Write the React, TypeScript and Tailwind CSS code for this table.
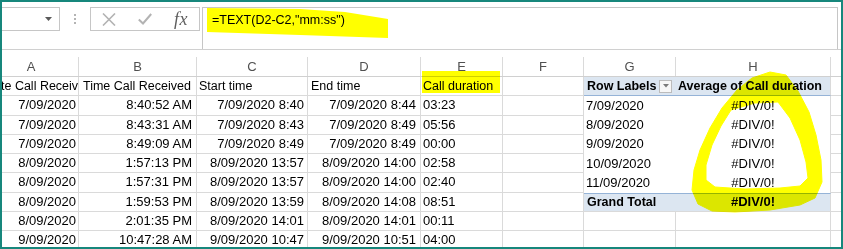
import React from "react";

const data: string[][] = [
  ["7/09/2020", "8:40:52 AM", "7/09/2020 8:40", "7/09/2020 8:44", "03:23"],
  ["7/09/2020", "8:43:31 AM", "7/09/2020 8:43", "7/09/2020 8:49", "05:56"],
  ["7/09/2020", "8:49:09 AM", "7/09/2020 8:49", "7/09/2020 8:49", "00:00"],
  ["8/09/2020", "1:57:13 PM", "8/09/2020 13:57", "8/09/2020 14:00", "02:58"],
  ["8/09/2020", "1:57:31 PM", "8/09/2020 13:57", "8/09/2020 14:00", "02:40"],
  ["8/09/2020", "1:59:53 PM", "8/09/2020 13:59", "8/09/2020 14:08", "08:51"],
  ["8/09/2020", "2:01:35 PM", "8/09/2020 14:01", "8/09/2020 14:01", "00:11"],
  ["9/09/2020", "10:47:28 AM", "9/09/2020 10:47", "9/09/2020 10:51", "04:00"],
];
const pivot = ["7/09/2020", "8/09/2020", "9/09/2020", "10/09/2020", "11/09/2020"];

const G = "border-[#dadada]";

function HeaderRow() {
  const letters: [string, string][] = [
    ["B", "w-[118px]"],
    ["C", "w-[111px]"],
    ["D", "w-[113px]"],
    ["E", "w-[82px]"],
    ["F", "w-[81px]"],
    ["G", "w-[92px]"],
    ["H", "w-[155px]"],
  ];
  return (
    <div className="h-[20px] flex border-b border-[#d0d0d0] text-[#505050] text-[13px]">
      <div className="w-[77px] shrink-0 overflow-hidden border-r border-[#dadada]">
        <div className="ml-[-19px] w-[96px] h-full flex items-center justify-center">A</div>
      </div>
      {letters.map(([l, w]) => (
        <div key={l} className={`${w} shrink-0 h-full flex items-center justify-center border-r border-[#dadada]`}>
          {l}
        </div>
      ))}
      <div className="flex-1" />
    </div>
  );
}

function TitleRow() {
  return (
    <div className="h-[19.25px] flex text-[12.5px]">
      <div className={`w-[77px] shrink-0 h-full overflow-hidden border-r border-b ${G}`}>
        <div className="ml-[-19px] w-[96px] h-full flex items-center pl-[2px] whitespace-nowrap">Date Call Received</div>
      </div>
      <div className={`w-[118px] shrink-0 h-full flex items-center pl-[4px] border-r border-b ${G} whitespace-nowrap overflow-hidden`}>Time Call Received</div>
      <div className={`w-[111px] shrink-0 h-full flex items-center pl-[2px] border-r border-b ${G}`}>Start time</div>
      <div className={`w-[113px] shrink-0 h-full flex items-center pl-[3px] border-r border-b ${G}`}>End time</div>
      <div className={`w-[82px] shrink-0 h-full flex items-center pl-[2px] border-r border-b ${G} whitespace-nowrap`}>Call duration</div>
      <div className={`w-[81px] shrink-0 h-full border-r border-b ${G}`} />
      <div className="w-[92px] shrink-0 h-full flex items-center justify-between pl-[3px] pr-[4px] bg-[#dce6f1] border-b border-b-[#95b3d7] font-bold">
        <span className="whitespace-nowrap">Row Labels</span>
        <span className="w-[13px] h-[13px] border border-[#bcbcbc] bg-[#f7f7f7] flex items-center justify-center">
          <svg width="6" height="4" viewBox="0 0 6 4">
            <path d="M0 0H6L3 3.5Z" fill="#7a7a7a" />
          </svg>
        </span>
      </div>
      <div className="w-[155px] shrink-0 h-full flex items-center pl-[2px] bg-[#dce6f1] border-b border-b-[#95b3d7] border-r border-r-[#dadada] font-bold whitespace-nowrap">
        Average of Call duration
      </div>
      <div className={`flex-1 h-full border-b ${G}`} />
    </div>
  );
}

function DataRow({ r, i }: { r: string[]; i: number }) {
  const inPivot = i < 5;
  const grand = i === 5;
  return (
    <div className="h-[19.25px] flex">
      <div className={`w-[77px] shrink-0 h-full overflow-hidden border-r border-b ${G}`}>
        <div className="ml-[-19px] w-[96px] h-full flex items-center justify-end pr-[3px]">{r[0]}</div>
      </div>
      <div className={`w-[118px] shrink-0 h-full flex items-center justify-end pr-[4px] border-r border-b ${G}`}>{r[1]}</div>
      <div className={`w-[111px] shrink-0 h-full flex items-center justify-end pr-[3px] border-r border-b ${G} whitespace-nowrap`}>{r[2]}</div>
      <div className={`w-[113px] shrink-0 h-full flex items-center justify-end pr-[4px] border-r border-b ${G} whitespace-nowrap`}>{r[3]}</div>
      <div className={`w-[82px] shrink-0 h-full flex items-center pl-[2px] border-r border-b ${G}`}>{r[4]}</div>
      <div className={`w-[81px] shrink-0 h-full border-r border-b ${G}`} />
      {inPivot ? (
        <>
          <div className="w-[92px] shrink-0 h-full flex items-center pl-[2px]">{pivot[i]}</div>
          <div className="w-[155px] shrink-0 h-full flex items-center justify-center border-r border-[#dadada]">#DIV/0!</div>
        </>
      ) : grand ? (
        <>
          <div className="w-[92px] shrink-0 h-full flex items-center pl-[3px] bg-[#dce6f1] border-t border-t-[#95b3d7] border-b border-b-[#dadada] font-bold whitespace-nowrap text-[12.5px]">
            Grand Total
          </div>
          <div className="w-[155px] shrink-0 h-full flex items-center justify-center bg-[#dce6f1] border-t border-t-[#95b3d7] border-b border-b-[#dadada] border-r border-r-[#dadada] font-bold">
            #DIV/0!
          </div>
        </>
      ) : (
        <>
          <div className={`w-[92px] shrink-0 h-full border-r border-b ${G}`} />
          <div className={`w-[155px] shrink-0 h-full border-r border-b ${G}`} />
        </>
      )}
      <div className={`flex-1 h-full border-b ${G}`} />
    </div>
  );
}

export default function App() {
  return (
    <div className="relative w-[843px] h-[249px] overflow-hidden border-2 border-[#17877c] bg-white font-['Liberation_Sans',Arial,sans-serif] text-[13px] leading-[16px] text-black">
      {/* formula bar */}
      <div className="h-[48px] border-b border-[#d0d0d0] flex items-start">
        <div className="mt-[5px] w-[58px] h-[24px] shrink-0 border-y border-r border-[#c6c6c6] flex items-center justify-end pr-[7px]">
          <svg width="7" height="4" viewBox="0 0 7 4">
            <path d="M0 0H7L3.5 4Z" fill="#5a5a5a" />
          </svg>
        </div>
        <div className="ml-[14px] mt-[12px] w-[2px] flex flex-col gap-[2px]">
          <div className="w-[2px] h-[2px] bg-[#b4b4b4]" />
          <div className="w-[2px] h-[2px] bg-[#b4b4b4]" />
          <div className="w-[2px] h-[2px] bg-[#b4b4b4]" />
        </div>
        <div className="ml-[14px] mt-[5px] w-[110px] h-[24px] shrink-0 border border-[#c6c6c6] flex items-center pl-[11px] gap-[22px]">
          <svg width="14" height="13" viewBox="0 0 14 13">
            <path d="M1 0.5L13 12.5M13 0.5L1 12.5" stroke="#b3b3b3" strokeWidth="1.6" fill="none" />
          </svg>
          <svg width="14" height="12" viewBox="0 0 14 12">
            <path d="M0.8 6.5L5 10.5L13.2 1" stroke="#b3b3b3" strokeWidth="2" fill="none" />
          </svg>
          <span className="font-['Liberation_Serif',serif] italic text-[18px] leading-[18px] text-[#5e5e5e] tracking-[0.5px]">fx</span>
        </div>
        <div className="ml-[2px] mt-[5px] self-stretch flex-1 mr-[3px] border-l border-t border-r border-[#c6c6c6] pl-[9px] pt-[4px] whitespace-nowrap text-[12.5px]">
          =TEXT(D2-C2,"mm:ss")
        </div>
      </div>
      <div className="h-[7px]" />
      <HeaderRow />
      <TitleRow />
      {data.map((r, i) => (
        <DataRow key={i} r={r} i={i} />
      ))}

      {/* highlighter annotations */}
      <svg
        className="pointer-events-none absolute left-[-2px] top-[-2px] mix-blend-multiply"
        width="843"
        height="249"
        viewBox="0 0 843 249"
      >
        <path d="M207 8 L300 9 L345 12 L388 19 L388 38 L300 35 L207 32 Z" fill="#ffff00" />
        <rect x="422" y="71" width="78" height="22" fill="#ffff00" />
        <path
          fillRule="evenodd"
          fill="#ffff00"
          stroke="#ffff00"
          strokeWidth="1"
          strokeLinejoin="round"
          d="M770 72 L786 75 L798 91 L809 112 L816 135 L821 160 L822 182 L815 198 L800 205 L770 210 L735 212 L712 211 L698 204 L692 190 L694 170 L700 150 L710 128 L722 108 L737 90 L752 78 Z
             M778 102 L790 118 L800 140 L806 162 L808 178 L800 186 L780 188 L745 189 L715 187 L706 180 L706 165 L712 145 L721 126 L731 110 L755 103 Z"
        />
      </svg>
    </div>
  );
}
